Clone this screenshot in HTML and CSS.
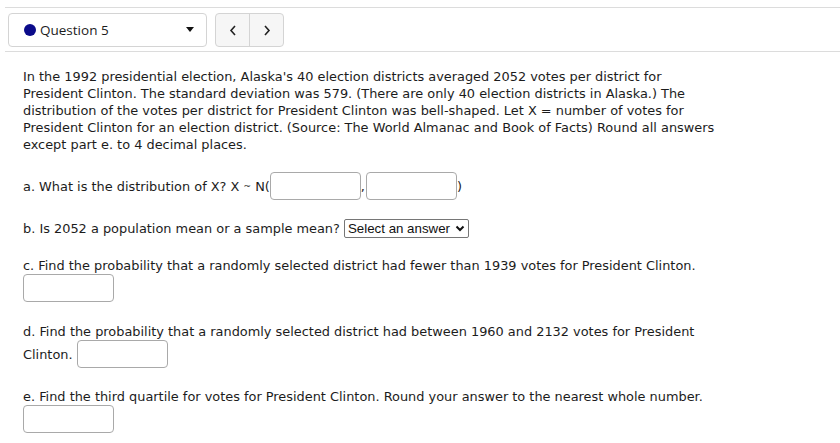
FILE: index.html
```html
<!DOCTYPE html>
<html>
<head>
<meta charset="utf-8">
<link rel="stylesheet" href="styles.css">
</head>
<body>
<div class="header">
  <div class="qselect">
    <span class="dot"></span>
    <span class="qlabel">Question 5</span>
    <svg class="caret" width="8" height="6" viewBox="0 0 8 6"><polygon points="0,0 8,0 4,5" fill="#111"/></svg>
  </div>
  <div class="nav">
    <div class="navbtn"><svg width="8" height="11" viewBox="0 0 8 11"><polyline points="6,1 2,5.5 6,10" fill="none" stroke="#222" stroke-width="1.6"/></svg></div>
    <div class="navbtn"><svg width="8" height="11" viewBox="0 0 8 11"><polyline points="2,1 6,5.5 2,10" fill="none" stroke="#222" stroke-width="1.6"/></svg></div>
  </div>
</div>
<div class="content">
  <p class="para">In the 1992 presidential election, Alaska's 40 election districts averaged 2052 votes per district for<br>President Clinton. The standard deviation was 579. (There are only 40 election districts in Alaska.) The<br>distribution of the votes per district for President Clinton was bell-shaped. Let X = number of votes for<br>President Clinton for an election district. (Source: The World Almanac and Book of Facts) Round all answers<br>except part e. to 4 decimal places.</p>
  <div class="row part-a">a. What is the distribution of X? X <span class="tilde">~</span> N(<span class="box"></span>,<span class="box box2"></span>)</div>
  <div class="row part-b">b. Is 2052 a population mean or a sample mean? <span class="sel">Select an answer<svg width="10" height="7" viewBox="0 0 10 7"><polyline points="1.5,1.5 5,5 8.5,1.5" fill="none" stroke="#111" stroke-width="2"/></svg></span></div>
  <div class="line part-c">c. Find the probability that a randomly selected district had fewer than 1939 votes for President Clinton.</div>
  <span class="box blk"></span>
  <div class="line part-d">d. Find the probability that a randomly selected district had between 1960 and 2132 votes for President</div>
  <div class="row part-d2">Clinton. <span class="box"></span></div>
  <div class="line part-e">e. Find the third quartile for votes for President Clinton. Round your answer to the nearest whole number.</div>
  <span class="box blk"></span>
</div>
</body>
</html>
```
FILE: styles.css
```css
html, body {
  margin: 0;
  padding: 0;
  background: #fff;
}
body {
  width: 840px;
  height: 443px;
  overflow: hidden;
  font-family: "DejaVu Sans", sans-serif;
  font-size: 12.9px;
  color: #1c1c1c;
}
.header {
  margin: 7px 0 0 5px;
  border-top: 1px solid #dcdcdc;
  border-bottom: 1px solid #dcdcdc;
  padding: 5px 0 4px 3px;
  display: flex;
  gap: 8px;
}
.qselect {
  width: 199px;
  height: 34px;
  box-sizing: border-box;
  border: 1px solid #d4d4d4;
  border-radius: 4px;
  display: flex;
  align-items: center;
  padding: 0 12px 0 15px;
  font-family: "Open Sans", "Noto Sans", sans-serif;
  font-size: 13.5px;
  color: #1c1c1c;
}
.dot {
  width: 12px;
  height: 12px;
  border-radius: 50%;
  background: #0b0b8a;
  margin-right: 4px;
}
.qlabel {
  flex: 1;
}
.nav {
  display: flex;
  height: 34px;
  box-sizing: border-box;
  border: 1px solid #d4d4d4;
  border-radius: 4px;
  background: #f6f6f6;
}
.navbtn {
  width: 33px;
  display: flex;
  align-items: center;
  justify-content: center;
}
.navbtn + .navbtn {
  border-left: 1px solid #d4d4d4;
}
.content {
  padding: 16px 0 0 23px;
}
.para {
  margin: 0;
  line-height: 17px;
}
.row {
  display: flex;
  align-items: center;
  white-space: pre;
}
.tilde {
  font-size: 9px;
}
.part-a {
  margin-top: 18px;
  height: 30px;
}
.part-b {
  margin-top: 17px;
  height: 21px;
}
.line {
  line-height: 17px;
}
.part-c {
  margin-top: 18px;
}
.part-d {
  margin-top: 21px;
}
.part-d2 {
  margin-top: 0;
  height: 28px;
}
.part-e {
  margin-top: 20px;
}
.box {
  display: inline-block;
  width: 91px;
  height: 28px;
  box-sizing: border-box;
  border: 1px solid #a9a9a9;
  border-radius: 4px;
  background: #fff;
}
.box2 {
  margin-left: 1px;
}
.blk {
  display: block;
}
.sel {
  display: inline-flex;
  align-items: center;
  gap: 5px;
  height: 19px;
  box-sizing: border-box;
  border: 1px solid #767676;
  border-radius: 2px;
  padding: 0 3px 0 3px;
  font-family: "Liberation Sans", Arial, sans-serif;
  font-size: 13.3px;
  color: #111;
}
```
